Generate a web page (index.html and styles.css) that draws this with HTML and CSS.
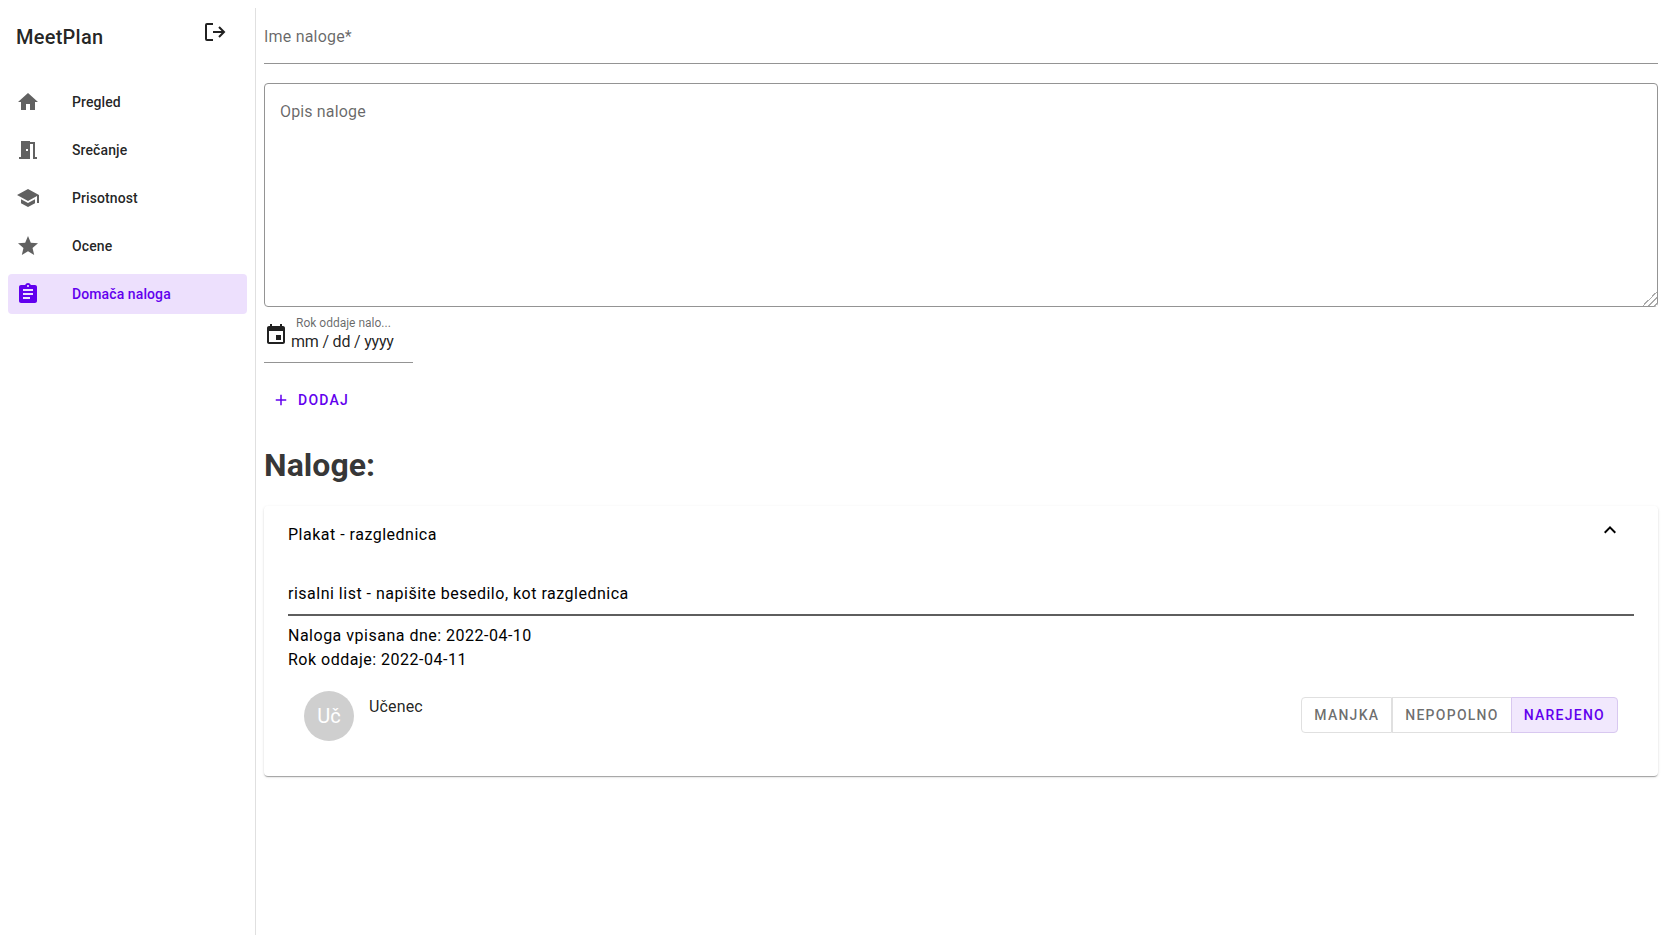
FILE: index.html
```html
<!DOCTYPE html>
<html lang="sl">
<head>
<meta charset="utf-8">
<title>MeetPlan</title>
<link rel="stylesheet" href="styles.css">
</head>
<body>
<div class="app">
  <aside class="sidebar">
    <div class="brand">
      <span class="brand-name">MeetPlan</span>
      <svg class="logout" viewBox="0 0 24 24" width="24" height="24"><path d="M10 4H4a1 1 0 0 0-1 1v14a1 1 0 0 0 1 1h6M10 12h11M16 7l5 5-5 5"/></svg>
    </div>
    <nav class="nav">
      <a class="nav-item"><svg viewBox="0 0 24 24" width="24" height="24"><path d="M10 20v-6h4v6h5v-8h3L12 3 2 12h3v8z"/></svg><span>Pregled</span></a>
      <a class="nav-item"><svg viewBox="0 0 24 24" width="24" height="24"><path d="M14 6v15H3v-2h2V3h9v1h5v15h2v2h-4V6h-3zm-4 5v2h2v-2h-2z"/></svg><span>Srečanje</span></a>
      <a class="nav-item"><svg viewBox="0 0 24 24" width="24" height="24"><path d="M5 13.180v4L12 21l7-3.820v-4L12 17l-7-3.820zM12 3 1 9l11 6 9-4.910V17h2V9L12 3z"/></svg><span>Prisotnost</span></a>
      <a class="nav-item"><svg viewBox="0 0 24 24" width="24" height="24"><path d="M12 17.270 18.180 21l-1.640-7.030L22 9.240l-7.190-.61L12 2 9.190 8.630 2 9.240l5.460 4.730L5.820 21z"/></svg><span>Ocene</span></a>
      <a class="nav-item active"><svg viewBox="0 0 24 24" width="24" height="24"><path d="M19 3h-4.180C14.400 1.840 13.300 1 12 1s-2.400.84-2.820 2H5c-1.100 0-2 .9-2 2v14c0 1.100.9 2 2 2h14c1.100 0 2-.9 2-2V5c0-1.100-.9-2-2-2zm-7 0c.55 0 1 .45 1 1s-.45 1-1 1-1-.45-1-1 .45-1 1-1zm2 14H7v-2h7v2zm3-4H7v-2h10v2zm0-4H7V7h10v2z"/></svg><span>Domača naloga</span></a>
    </nav>
  </aside>
  <main class="main">
    <input class="name-input" type="text" placeholder="Ime naloge*">
    <textarea class="desc" placeholder="Opis naloge"></textarea>
    <div class="date-field">
      <svg class="date-icon" viewBox="0 0 24 24" width="24" height="24"><path d="M17 12h-5v5h5v-5zM16 1v2H8V1H6v2H5c-1.110 0-1.990.9-1.990 2L3 19c0 1.100.89 2 2 2h14c1.100 0 2-.9 2-2V5c0-1.100-.9-2-2-2h-1V1h-2zm3 18H5V8h14v11z"/></svg>
      <div class="date-text">
        <span class="date-label">Rok oddaje nalo...</span>
        <span class="date-value">mm / dd / yyyy</span>
      </div>
    </div>
    <button class="add-btn" type="button">
      <svg viewBox="0 0 24 24" width="18" height="18"><path d="M19 13h-6v6h-2v-6H5v-2h6V5h2v6h6v2z"/></svg>
      <span>Dodaj</span>
    </button>
    <h2 class="heading">Naloge:</h2>
    <section class="card">
      <header class="card-head">
        <span>Plakat - razglednica</span>
        <svg viewBox="0 0 24 24" width="24" height="24"><path d="M12 8l-6 6 1.410 1.410L12 10.830l4.590 4.580L18 14z"/></svg>
      </header>
      <div class="card-body">
        <p class="task-desc">risalni list - napišite besedilo, kot razglednica</p>
        <p class="task-meta">Naloga vpisana dne: 2022-04-10</p>
        <p class="task-meta">Rok oddaje: 2022-04-11</p>
        <div class="student">
          <div class="avatar">Uč</div>
          <span class="student-name">Učenec</span>
          <div class="toggle">
            <button type="button">Manjka</button>
            <button type="button">Nepopolno</button>
            <button type="button" class="on">Narejeno</button>
          </div>
        </div>
      </div>
    </section>
  </main>
</div>
</body>
</html>
```
FILE: styles.css
```css
* { box-sizing: border-box; }
html, body { margin: 0; height: 100%; }
body {
  background: #fff;
  color: rgba(0,0,0,.87);
  font-family: Roboto, "Liberation Sans", sans-serif;
  font-size: 16px;
  overflow: hidden;
}
.app { display: flex; height: 935px; padding: 8px 8px 0 0; }
.sidebar {
  width: 256px;
  flex: none;
  border-right: 1px solid #e0e0e0;
  padding-right: 8px;
}
.brand {
  display: flex;
  align-items: flex-start;
  justify-content: space-between;
  padding: 0 20px 0 16px;
  height: 58px;
}
.brand-name { font-size: 20px; font-weight: 500; line-height: 24px; margin-top: 17px; letter-spacing: .25px; }
.logout { margin-top: 12px; fill: none; stroke: #212121; stroke-width: 2; }
.nav { display: flex; flex-direction: column; gap: 8px; padding: 16px 0 0 8px; }
.nav-item {
  display: flex;
  align-items: center;
  height: 40px;
  padding-left: 8px;
  border-radius: 4px;
  font-size: 14px;
  font-weight: 500;
  letter-spacing: .1px;
}
.nav-item svg { fill: #616161; margin-right: 32px; flex: none; }
.nav-item.active { background: #ede0fd; color: #6200ee; }
.nav-item.active svg { fill: #6200ee; }
.main { flex: 1; min-width: 0; padding-left: 8px; margin-top: -8px; }
.name-input {
  display: block;
  width: 100%;
  height: 64px;
  border: 0;
  border-bottom: 1px solid #949494;
  outline: 0;
  background: transparent;
  padding: 10px 0 0;
  font: 16px Roboto, sans-serif;
  letter-spacing: .2px;
}
.name-input::placeholder, .desc::placeholder { color: rgba(0,0,0,.6); opacity: 1; }
.desc {
  display: block;
  width: 100%;
  height: 224px;
  margin-top: 19px;
  border: 1px solid #949494;
  border-radius: 4px;
  outline: 0;
  padding: 16px 15px;
  font: 16px/24px Roboto, sans-serif;
  letter-spacing: .15px;
  resize: both;
}
.desc::-webkit-resizer {
  background:
    linear-gradient(135deg, #fff 50%, transparent 50%),
    repeating-linear-gradient(135deg, #fff 0, #fff 2.500px, #aaa 2.500px, #aaa 4px);
}
.date-field {
  display: flex;
  width: 149px;
  height: 56px;
  border-bottom: 1px solid #949494;
  margin-top: 0;
}
.date-icon { fill: #212121; margin-top: 16px; flex: none; margin-right: 3px; }
.date-text { display: flex; flex-direction: column; padding-top: 8px; }
.date-label { font-size: 12px; line-height: 16px; color: rgba(0,0,0,.6); margin-left: 5px; }
.date-value { font-size: 16px; line-height: 22px; margin-top: 0; letter-spacing: -.2px; }
.add-btn {
  display: flex;
  align-items: center;
  gap: 8px;
  height: 36px;
  margin-top: 19px;
  padding: 0 8px;
  border: 0;
  background: transparent;
  color: #6200ee;
  font: 500 14px Roboto, sans-serif;
  letter-spacing: 1.25px;
  text-transform: uppercase;
}
.add-btn svg { fill: #6200ee; flex: none; }
.heading { margin: 0; padding-top: 27px; height: 88px; font-size: 32px; font-weight: 700; line-height: 40px; letter-spacing: .05px; color: rgba(0,0,0,.8); }
.card {
  height: 270px;
  border-radius: 4px;
  box-shadow: 0 2px 1px -1px rgba(0,0,0,.2), 0 1px 1px 0 rgba(0,0,0,.14), 0 1px 3px 0 rgba(0,0,0,.12);
  padding: 0 24px;
  color: #000;
}
.card-head {
  display: flex;
  justify-content: space-between;
  height: 65px;
  padding-top: 17px;
  line-height: 24px;
  letter-spacing: .5px;
}
.card-head svg { fill: #000; margin-top: -5px; margin-right: 12px; }
.card-body { padding-top: 12px; }
.task-desc, .task-meta { margin: 0; line-height: 24px; letter-spacing: .5px; }
.task-desc { height: 33px; border-bottom: 2px solid #5e5e5e; margin-bottom: 8px; line-height: 22px; margin-top: 0; }
.student { display: flex; align-items: flex-start; padding: 19px 16px 0; }
.avatar {
  width: 50px;
  height: 50px;
  border-radius: 50%;
  background: #cfcfcf;
  color: #fff;
  display: flex;
  align-items: center;
  justify-content: center;
  font-size: 20px;
  flex: none;
}
.student-name { margin: 4px 0 0 15px; line-height: 24px; letter-spacing: .15px; color: rgba(0,0,0,.87); }
.toggle { display: flex; margin-left: auto; margin-top: 6px; }
.toggle button {
  height: 36px;
  padding: 0 12px;
  border: 1px solid #e0e0e0;
  background: #fff;
  color: rgba(0,0,0,.58);
  font: 500 14px Roboto, sans-serif;
  letter-spacing: 1.25px;
  text-transform: uppercase;
}
.toggle button:first-child { border-radius: 4px 0 0 4px; }
.toggle button:last-child { border-radius: 0 4px 4px 0; margin-left: -1px; }
.toggle .on { background: #f1e8fd; color: #6200ee; border-color: #d8c8f0; }
```
